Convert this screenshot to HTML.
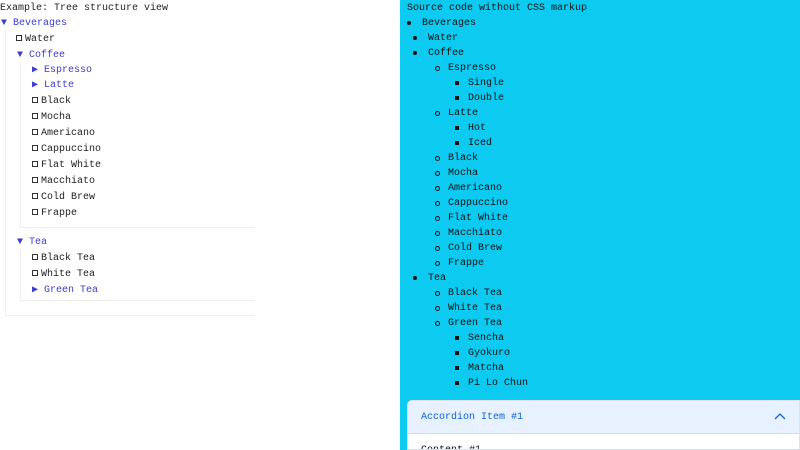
<!DOCTYPE html>
<html><head><meta charset="utf-8"><style>
*{margin:0;padding:0;box-sizing:border-box}
body{width:800px;height:450px;overflow:hidden;background:#fff;font-family:"Liberation Mono",monospace;font-size:10px;color:#222;position:relative}
.t{position:absolute;white-space:pre;line-height:16px}
.b{color:#3b3bd6}
.box{position:absolute;border-left:1px solid #eee;border-bottom:1px solid #eee}
.sq{display:inline-block;width:6px;height:6px;border:1px solid #333;margin-right:3px;vertical-align:0px}
#r{position:absolute;left:400px;top:0;width:400px;height:450px;background:#0dcaf0;font-size:10px;color:#111}
#r .t{line-height:18px}
.dot{position:absolute;width:4px;height:4px;border-radius:50%;background:#111;margin-top:1px}
.cir{position:absolute;width:5px;height:5px;border-radius:50%;border:1px solid #111;margin-top:1px}
.sqr{position:absolute;width:4px;height:4px;background:#111;margin-top:1px}
</style></head><body>
<div class="box" style="left:5px;top:30px;width:250px;height:286px"></div>
<div class="box" style="left:20px;top:62px;width:235px;height:166px"></div>
<div class="box" style="left:20px;top:249px;width:235px;height:52px"></div>
<div class="t" style="left:0;top:1px">Example: Tree structure view</div>
<div class="t b" style="left:1px;top:16px">▼ Beverages</div>
<div class="t" style="left:16px;top:32px"><span class="sq"></span>Water</div>
<div class="t b" style="left:17px;top:48px">▼ Coffee</div>
<div class="t b" style="left:32px;top:63px">▶ Espresso</div>
<div class="t b" style="left:32px;top:78px">▶ Latte</div>
<div class="t" style="left:32px;top:94px"><span class="sq"></span>Black</div>
<div class="t" style="left:32px;top:110px"><span class="sq"></span>Mocha</div>
<div class="t" style="left:32px;top:126px"><span class="sq"></span>Americano</div>
<div class="t" style="left:32px;top:142px"><span class="sq"></span>Cappuccino</div>
<div class="t" style="left:32px;top:158px"><span class="sq"></span>Flat White</div>
<div class="t" style="left:32px;top:174px"><span class="sq"></span>Macchiato</div>
<div class="t" style="left:32px;top:190px"><span class="sq"></span>Cold Brew</div>
<div class="t" style="left:32px;top:206px"><span class="sq"></span>Frappe</div>
<div class="t b" style="left:17px;top:235px">▼ Tea</div>
<div class="t" style="left:32px;top:251px"><span class="sq"></span>Black Tea</div>
<div class="t" style="left:32px;top:267px"><span class="sq"></span>White Tea</div>
<div class="t b" style="left:32px;top:283px">▶ Green Tea</div>

<div id="r">
<div class="t" style="left:7px;top:0">Source code without CSS markup</div>
<div class="dot" style="left:7px;top:20px"></div><div class="t" style="left:22px;top:15px">Beverages</div>
<div class="dot" style="left:13px;top:35px"></div><div class="t" style="left:28px;top:30px">Water</div>
<div class="dot" style="left:13px;top:50px"></div><div class="t" style="left:28px;top:45px">Coffee</div>
<div class="cir" style="left:35px;top:65px"></div><div class="t" style="left:48px;top:60px">Espresso</div>
<div class="sqr" style="left:55px;top:80px"></div><div class="t" style="left:68px;top:75px">Single</div>
<div class="sqr" style="left:55px;top:95px"></div><div class="t" style="left:68px;top:90px">Double</div>
<div class="cir" style="left:35px;top:110px"></div><div class="t" style="left:48px;top:105px">Latte</div>
<div class="sqr" style="left:55px;top:125px"></div><div class="t" style="left:68px;top:120px">Hot</div>
<div class="sqr" style="left:55px;top:140px"></div><div class="t" style="left:68px;top:135px">Iced</div>
<div class="cir" style="left:35px;top:155px"></div><div class="t" style="left:48px;top:150px">Black</div>
<div class="cir" style="left:35px;top:170px"></div><div class="t" style="left:48px;top:165px">Mocha</div>
<div class="cir" style="left:35px;top:185px"></div><div class="t" style="left:48px;top:180px">Americano</div>
<div class="cir" style="left:35px;top:200px"></div><div class="t" style="left:48px;top:195px">Cappuccino</div>
<div class="cir" style="left:35px;top:215px"></div><div class="t" style="left:48px;top:210px">Flat White</div>
<div class="cir" style="left:35px;top:230px"></div><div class="t" style="left:48px;top:225px">Macchiato</div>
<div class="cir" style="left:35px;top:245px"></div><div class="t" style="left:48px;top:240px">Cold Brew</div>
<div class="cir" style="left:35px;top:260px"></div><div class="t" style="left:48px;top:255px">Frappe</div>
<div class="dot" style="left:13px;top:275px"></div><div class="t" style="left:28px;top:270px">Tea</div>
<div class="cir" style="left:35px;top:290px"></div><div class="t" style="left:48px;top:285px">Black Tea</div>
<div class="cir" style="left:35px;top:305px"></div><div class="t" style="left:48px;top:300px">White Tea</div>
<div class="cir" style="left:35px;top:320px"></div><div class="t" style="left:48px;top:315px">Green Tea</div>
<div class="sqr" style="left:55px;top:335px"></div><div class="t" style="left:68px;top:330px">Sencha</div>
<div class="sqr" style="left:55px;top:350px"></div><div class="t" style="left:68px;top:345px">Gyokuro</div>
<div class="sqr" style="left:55px;top:365px"></div><div class="t" style="left:68px;top:360px">Matcha</div>
<div class="sqr" style="left:55px;top:380px"></div><div class="t" style="left:68px;top:375px">Pi Lo Chun</div>
<div style="position:absolute;left:7px;top:400px;width:393px;height:50px;background:#fff;border:1px solid #dee2e6;border-radius:5px 0 0 0;overflow:hidden">
<div style="height:33px;background:#e7f1ff;border-bottom:1px solid #d0dcec;position:relative">
<div class="t" style="left:13px;top:8px;color:#0c63e4">Accordion Item #1</div>
<svg style="position:absolute;left:366px;top:11px" width="12" height="10" viewBox="0 0 12 10"><path d="M1 7 L6 2 L11 7" fill="none" stroke="#0c63e4" stroke-width="1.3"/></svg>
</div>
<div class="t" style="left:13px;top:41px">Content #1</div>
</div>
</div>
</body></html>
